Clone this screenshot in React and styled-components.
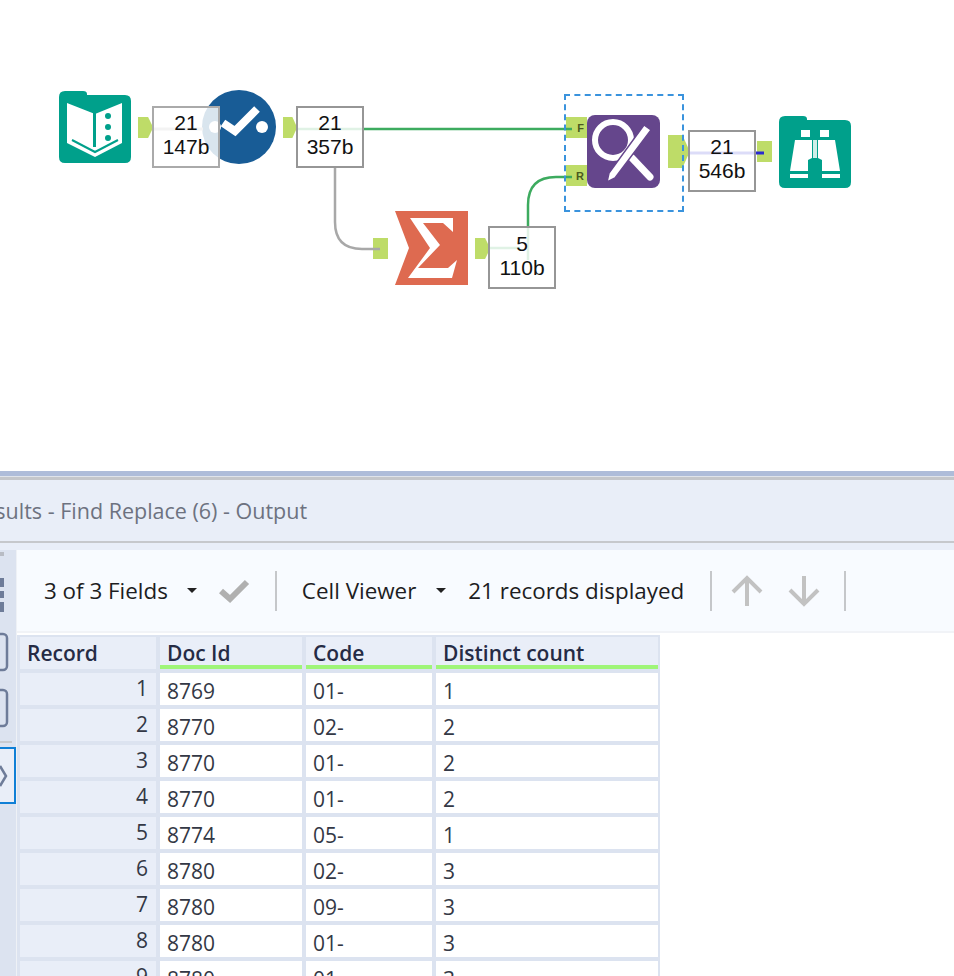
import React from "react";
import styled, { createGlobalStyle } from "styled-components";

const Global = createGlobalStyle`
  html, body { margin: 0; padding: 0; background: #fff; }
  #root { width: 954px; height: 976px; overflow: hidden; }
`;

const Page = styled.div`
  width: 954px;
  height: 976px;
  overflow: hidden;
  display: flex;
  flex-direction: column;
  font-family: "Open Sans", "Noto Sans", sans-serif;
`;

/* ---------- workflow canvas ---------- */
const Canvas = styled.div`
  position: relative;
  height: 471px;
  flex: none;
  background: #fff;
  font-family: "Liberation Sans", Arial, sans-serif;
`;

const Wires = styled.svg`
  position: absolute;
  left: 0;
  top: 0;
  width: 954px;
  height: 471px;
`;

const ToolIcon = styled.svg`
  position: absolute;
  left: ${(p) => p.$x}px;
  top: ${(p) => p.$y}px;
  width: ${(p) => p.$w}px;
  height: ${(p) => p.$h}px;
`;

const Badge = styled.div`
  position: absolute;
  left: ${(p) => p.$x}px;
  top: ${(p) => p.$y}px;
  width: 68px;
  height: ${(p) => p.$h || 62}px;
  box-sizing: border-box;
  border: 2px solid ${(p) => (p.$light ? "#aaa" : "#969696")};
  background: rgba(255, 255, 255, 0.84);
  display: flex;
  flex-direction: column;
  align-items: center;
  justify-content: center;
  padding-bottom: 4px;
  font-size: 21px;
  line-height: 24px;
  color: #111;
`;

const Anchor = styled.div`
  position: absolute;
  left: ${(p) => p.$x}px;
  top: ${(p) => p.$y}px;
  width: ${(p) => p.$w}px;
  height: ${(p) => p.$h || 21}px;
  background: #bedc68;
  clip-path: ${(p) =>
    p.$kind === "out"
      ? "polygon(0 0, 72% 0, 100% 38%, 100% 62%, 72% 100%, 0 100%)"
      : "none"};
`;

const LabeledAnchor = styled(Anchor)`
  display: flex;
  align-items: center;
  justify-content: flex-end;
  padding-right: 3px;
  box-sizing: border-box;
  font-size: 11px;
  font-weight: 700;
  color: #4a5a20;
`;

const Selection = styled.div`
  position: absolute;
  left: 564px;
  top: 94px;
  width: 120px;
  height: 118px;
  box-sizing: border-box;
  border: 2px dashed #3a93dd;
`;

/* ---------- results panel ---------- */
const Panel = styled.div`
  flex: 1;
  min-height: 0;
  display: flex;
  flex-direction: column;
  background: #fff;
`;

const Splitter = styled.div`
  flex: none;
  height: 9px;
  box-sizing: border-box;
  background: #aebcd9;
  border-bottom: 3px solid #c4c6ca;
  box-shadow: inset 0 -1px 0 #dfe3ea;
`;

const TitleBar = styled.div`
  flex: none;
  height: 63px;
  box-sizing: border-box;
  background: #e9eef8;
  border-bottom: 2px solid #c6c8cc;
  display: flex;
  align-items: center;
  overflow: hidden;
  padding-bottom: 1px;
`;

const Title = styled.span`
  margin-left: -30px;
  font-size: 21.5px;
  color: #6d7280;
  white-space: nowrap;
`;

const Body = styled.div`
  flex: 1;
  min-height: 0;
  display: flex;
  background: #e9eef8;
  padding-top: 7px;
`;

const SideBar = styled.div`
  flex: none;
  width: 16px;
  background: #dce3f0;
  overflow: hidden;
`;

const SideArt = styled.svg`
  display: block;
  width: 16px;
  height: 260px;
`;

const Content = styled.div`
  flex: 1;
  min-width: 0;
  display: flex;
  flex-direction: column;
  background: #fff;
  border-left: 1px solid #eef1f6;
`;

const Toolbar = styled.div`
  flex: none;
  height: 83px;
  box-sizing: border-box;
  background: #f8fbff;
  border-bottom: 2px solid #f1f3f7;
  display: flex;
  align-items: center;
  padding-left: 27px;
  font-size: 22.4px;
  color: #1d1d22;
`;

const ToolText = styled.span`
  white-space: nowrap;
  margin-left: ${(p) => p.$ml || 0}px;
`;

const Caret = styled.span`
  width: 0;
  height: 0;
  border-left: 5px solid transparent;
  border-right: 5px solid transparent;
  border-top: 5px solid #222;
  margin-left: ${(p) => p.$ml}px;
`;

const Sep = styled.span`
  width: 2px;
  height: 40px;
  background: #c5c7ca;
  margin-left: ${(p) => p.$ml}px;
`;

const ToolGlyph = styled.svg`
  flex: none;
  margin-left: ${(p) => p.$ml}px;
`;

const Table = styled.div`
  margin-top: 2px;
  width: max-content;
  display: grid;
  grid-template-columns: 136px 142px 126px 222px;
  grid-auto-rows: 32px;
  gap: 4px;
  padding: 2px 2px 0 3px;
  background: #dce3f0;
  font-size: 21px;
`;

const HeadCell = styled.div`
  box-sizing: border-box;
  background: #e9eef8;
  padding-left: 7px;
  font-weight: 600;
  color: #252b45;
  line-height: 33px;
  border-bottom: ${(p) => (p.$field ? "4px solid #9ff578" : "none")};
  white-space: nowrap;
`;

const RecordCell = styled.div`
  background: #e9eef8;
  text-align: right;
  padding-right: 8px;
  line-height: 30px;
  color: #333845;
`;

const DataCell = styled.div`
  background: #fff;
  padding-left: 7px;
  line-height: 37px;
  color: #333845;
`;

const rows = [
  [1, "8769", "01-", "1"],
  [2, "8770", "02-", "2"],
  [3, "8770", "01-", "2"],
  [4, "8770", "01-", "2"],
  [5, "8774", "05-", "1"],
  [6, "8780", "02-", "3"],
  [7, "8780", "09-", "3"],
  [8, "8780", "01-", "3"],
  [9, "8780", "01-", "3"],
];

const TEAL = "#00a08b";
const folder = "M6 0H24Q28 0 28 3V4H66Q72 4 72 10V66Q72 72 66 72H6Q0 72 0 66V6Q0 0 6 0Z";

export default function App() {
  return (
    <Page>
      <Global />
      <Canvas>
        <ToolIcon $x={59} $y={91} $w={72} $h={73} viewBox="0 0 72 73">
          <path d={folder} fill={TEAL} />
          <path d="M8 12L36 23L63 12V52L36 66L8 52Z" fill="#fff" />
          <path d="M35.5 22V56" stroke={TEAL} strokeWidth="3" />
          <path d="M13 49L36 61L59 49" fill="none" stroke={TEAL} strokeWidth="2" />
          <circle cx="49" cy="25" r="3" fill={TEAL} />
          <circle cx="49" cy="36" r="3" fill={TEAL} />
          <circle cx="49" cy="47" r="3" fill={TEAL} />
        </ToolIcon>

        <ToolIcon $x={202} $y={90} $w={74} $h={74} viewBox="0 0 74 74">
          <circle cx="37" cy="37" r="37" fill="#185c96" />
          <circle cx="13" cy="37" r="6" fill="#fff" />
          <circle cx="60" cy="37" r="6" fill="#fff" />
          <path d="M21 33L33 41L55 19" fill="none" stroke="#fff" strokeWidth="8" />
        </ToolIcon>

        <ToolIcon $x={394} $y={211} $w={74} $h={74} viewBox="0 0 74 74">
          <path d="M1 0H74V74H1L15 37Z" fill="#de6a50" />
          <path d="M16 7H59V21L49 12H29L46 34L24 57H54L63 49L58 67H14L36 37Z" fill="#fff" />
        </ToolIcon>

        <ToolIcon $x={587} $y={115} $w={73} $h={73} viewBox="0 0 73 73">
          <rect width="73" height="73" rx="8" fill="#65468c" />
          <circle cx="26" cy="25" r="18" fill="none" stroke="#fff" strokeWidth="6" />
          <path d="M45 43L63 62" stroke="#fff" strokeWidth="7" strokeLinecap="round" />
          <path d="M57 10L64 15L28 63L20 67L22 58Z" fill="#fff" stroke="#65468c" strokeWidth="1.5" />
        </ToolIcon>

        <ToolIcon $x={779} $y={116} $w={72} $h={72} viewBox="0 0 72 72">
          <path d={folder} fill={TEAL} />
          <path d="M22 14H31V21H22Z M41 14H50V21H41Z" fill="#fff" />
          <path d="M16 24H33V42L29 44V55H11Z M39 24H56L61 55H43V44L39 42Z" fill="#fff" />
          <path d="M34 24H38V42H34Z" fill="#cfeee8" />
          <path d="M11 58H29V62H11Z M43 58H61V62H43Z" fill="#fff" />
        </ToolIcon>

        <Anchor $x={138} $y={117} $w={14} $kind="out" />
        <Anchor $x={283} $y={117} $w={13} $kind="out" />
        <Anchor $x={373} $y={238} $w={15} />
        <Anchor $x={475} $y={238} $w={14} $kind="out" />
        <Anchor $x={668} $y={135} $w={20} $h={33} $kind="out" />
        <Anchor $x={757} $y={141} $w={15} />
        <LabeledAnchor $x={566} $y={117} $w={21}>F</LabeledAnchor>
        <LabeledAnchor $x={566} $y={165} $w={21}>R</LabeledAnchor>

        <Wires viewBox="0 0 954 471">
          <path d="M152 129H203" stroke="#b5b5b5" strokeWidth="3" fill="none" />
          <path d="M296 129H572" stroke="#3dab5f" strokeWidth="2.5" fill="none" />
          <path d="M335 168V222Q335 249 362 249H380" stroke="#a8a8a8" strokeWidth="2.5" fill="none" />
          <path d="M489 248H520" stroke="#3dab5f" strokeWidth="2.5" fill="none" />
          <path d="M528 260V205Q528 177 556 177H572" stroke="#3dab5f" strokeWidth="2.5" fill="none" />
          <path d="M688 153H764" stroke="#2a2ad0" strokeWidth="3" fill="none" />
        </Wires>

        <Selection />

        <Badge $x={152} $y={106} $light><span>21</span><span>147b</span></Badge>
        <Badge $x={296} $y={106}><span>21</span><span>357b</span></Badge>
        <Badge $x={488} $y={226} $h={63}><span>5</span><span>110b</span></Badge>
        <Badge $x={688} $y={130}><span>21</span><span>546b</span></Badge>
      </Canvas>

      <Panel>
        <Splitter />
        <TitleBar>
          <Title>Results - Find Replace (6) - Output</Title>
        </TitleBar>
        <Body>
          <SideBar>
            <SideArt viewBox="0 0 16 260">
              <rect x="0" y="2" width="4" height="4" fill="#b8bcc4" />
              <rect x="0" y="28" width="4" height="9" fill="#6e7c99" />
              <rect x="0" y="41" width="4" height="7" fill="#6e7c99" />
              <rect x="0" y="52" width="4" height="10" fill="#6e7c99" />
              <rect x="-8" y="84" width="15" height="36" rx="4" fill="none" stroke="#6e7c99" strokeWidth="2.5" />
              <rect x="-8" y="140" width="15" height="36" rx="4" fill="none" stroke="#6e7c99" strokeWidth="2.5" />
              <rect x="0" y="191" width="12" height="2" fill="#c9cbd0" />
              <rect x="-4" y="198" width="19" height="55" fill="#e9eef8" stroke="#0f7fd6" strokeWidth="2" />
              <path d="M0 216L6 226L0 236" fill="none" stroke="#6e7c99" strokeWidth="2.5" />
            </SideArt>
          </SideBar>
          <Content>
            <Toolbar>
              <ToolText>3 of 3 Fields</ToolText>
              <Caret $ml={19} />
              <ToolGlyph $ml={21} width="32" height="26" viewBox="0 0 32 26">
                <path d="M3 13L12 21L29 4" fill="none" stroke="#b0b0b0" strokeWidth="6" />
              </ToolGlyph>
              <Sep $ml={25} />
              <ToolText $ml={25}>Cell Viewer</ToolText>
              <Caret $ml={20} />
              <ToolText $ml={22}>21 records displayed</ToolText>
              <Sep $ml={26} />
              <ToolGlyph $ml={19} width="32" height="32" viewBox="0 0 32 32">
                <path d="M16 31V3M2 17L16 3L30 17" fill="none" stroke="#c2c2c2" strokeWidth="4" />
              </ToolGlyph>
              <ToolGlyph $ml={25} width="32" height="32" viewBox="0 0 32 32">
                <path d="M16 1V29M2 15L16 29L30 15" fill="none" stroke="#c2c2c2" strokeWidth="4" />
              </ToolGlyph>
              <Sep $ml={24} />
            </Toolbar>
            <Table>
              <HeadCell>Record</HeadCell>
              <HeadCell $field>Doc Id</HeadCell>
              <HeadCell $field>Code</HeadCell>
              <HeadCell $field>Distinct count</HeadCell>
              {rows.map(([n, id, code, count]) => (
                <React.Fragment key={n}>
                  <RecordCell>{n}</RecordCell>
                  <DataCell>{id}</DataCell>
                  <DataCell>{code}</DataCell>
                  <DataCell>{count}</DataCell>
                </React.Fragment>
              ))}
            </Table>
          </Content>
        </Body>
      </Panel>
    </Page>
  );
}
